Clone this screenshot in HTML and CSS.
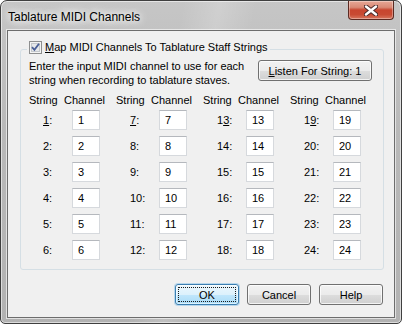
FILE: index.html
```html
<!DOCTYPE html>
<html lang="en">
<head>
    <meta charset="UTF-8">
    <title>Tablature MIDI Channels</title>
    <link rel="stylesheet" href="styles.css">
</head>
<body>
    <div class="window">
        <div class="titlebar">
            <span class="title">Tablature MIDI Channels</span>
            <button class="close-btn" title="Close">
                <svg width="14" height="11" viewBox="0 0 14 11">
                    <path d="M2 1.5 L12 9.5 M12 1.5 L2 9.5" stroke="#4a2a2a" stroke-width="4.4" stroke-linecap="round"/>
                    <path d="M2 1.5 L12 9.5 M12 1.5 L2 9.5" stroke="#fff" stroke-width="2.4" stroke-linecap="round"/>
                </svg>
            </button>
        </div>

        <div class="client">
            <fieldset class="group">
                <legend class="group-title">
                    <span class="check">
                        <svg width="13" height="13" viewBox="0 0 13 13">
                            <rect x="0.5" y="0.5" width="12" height="12" fill="#f4f4f4" stroke="#8e8f8f"/>
                            <rect x="2.5" y="2.5" width="8" height="8" fill="#e6e8ea" stroke="#c4c8cc"/>
                            <path d="M3 6.2 L5.4 8.8 L10 2.8" fill="none" stroke="#4a5f97" stroke-width="1.8"/>
                        </svg>
                    </span>
                    <span><u>M</u>ap MIDI Channels To Tablature Staff Strings</span>
                </legend>

                <div class="intro">
                    <p class="intro-text">Enter the input MIDI channel to use for each<br>string when recording to tablature staves.</p>
                    <button class="btn listen-btn"><u>L</u>isten For String: 1</button>
                </div>

                <div class="channels channels-head">
                    <span>String</span><span>Channel</span>
                    <span>String</span><span>Channel</span>
                    <span>String</span><span>Channel</span>
                    <span>String</span><span>Channel</span>
                </div>

                <div class="channels channels-body">
                    <label class="num"><u>1</u>:</label><div class="cell"><input class="chan" value="1"></div>
                    <label class="num"><u>7</u>:</label><div class="cell"><input class="chan" value="7"></div>
                    <label class="num">1<u>3</u>:</label><div class="cell"><input class="chan" value="13"></div>
                    <label class="num">1<u>9</u>:</label><div class="cell"><input class="chan" value="19"></div>

                    <label class="num">2:</label><div class="cell"><input class="chan" value="2"></div>
                    <label class="num">8:</label><div class="cell"><input class="chan" value="8"></div>
                    <label class="num">14:</label><div class="cell"><input class="chan" value="14"></div>
                    <label class="num">20:</label><div class="cell"><input class="chan" value="20"></div>

                    <label class="num">3:</label><div class="cell"><input class="chan" value="3"></div>
                    <label class="num">9:</label><div class="cell"><input class="chan" value="9"></div>
                    <label class="num">15:</label><div class="cell"><input class="chan" value="15"></div>
                    <label class="num">21:</label><div class="cell"><input class="chan" value="21"></div>

                    <label class="num">4:</label><div class="cell"><input class="chan" value="4"></div>
                    <label class="num">10:</label><div class="cell"><input class="chan" value="10"></div>
                    <label class="num">16:</label><div class="cell"><input class="chan" value="16"></div>
                    <label class="num">22:</label><div class="cell"><input class="chan" value="22"></div>

                    <label class="num">5:</label><div class="cell"><input class="chan" value="5"></div>
                    <label class="num">11:</label><div class="cell"><input class="chan" value="11"></div>
                    <label class="num">17:</label><div class="cell"><input class="chan" value="17"></div>
                    <label class="num">23:</label><div class="cell"><input class="chan" value="23"></div>

                    <label class="num">6:</label><div class="cell"><input class="chan" value="6"></div>
                    <label class="num">12:</label><div class="cell"><input class="chan" value="12"></div>
                    <label class="num">18:</label><div class="cell"><input class="chan" value="18"></div>
                    <label class="num">24:</label><div class="cell"><input class="chan" value="24"></div>
                </div>
            </fieldset>

            <div class="actions">
                <button class="btn btn-default">OK</button>
                <button class="btn">Cancel</button>
                <button class="btn">Help</button>
            </div>
        </div>
    </div>
</body>
</html>
```

FILE: styles.css
```css
* {
    box-sizing: border-box;
}

body {
    margin: 0;
    background: #fff;
    font-family: "Liberation Sans", Arial, sans-serif;
    font-size: 11px;
    color: #000;
}

/* window frame */
.window {
    width: 402px;
    height: 324px;
    padding: 0 6px 5px 6px;
    border: 1px solid #3f3f3f;
    border-radius: 7px 7px 5px 5px;
    background:
        linear-gradient(100deg, rgba(255,255,255,0) 40%, rgba(255,255,255,0.18) 48%, rgba(255,255,255,0) 56%),
        linear-gradient(180deg, #c6c6c6 0%, #b9b9b9 40%, #b2b2b2 100%);
    box-shadow: inset 0 0 0 1px rgba(255,255,255,0.55);
    display: flex;
    flex-direction: column;
}

.titlebar {
    height: 29px;
    display: flex;
    align-items: flex-start;
}

.title {
    padding: 9px 0 0 1px;
    font-size: 12px;
    line-height: 14px;
    color: #000;
    text-shadow: 0 0 6px #fff, 0 0 10px #fff, 0 0 14px #f2f2f2;
}

.close-btn {
    margin-left: auto;
    margin-right: 1px;
    width: 46px;
    height: 19px;
    padding: 0;
    border: 1px solid #5b2a22;
    border-top: none;
    border-radius: 0 0 4px 4px;
    background: linear-gradient(180deg, #e7a796 0%, #d98a76 35%, #c8452f 50%, #c84a33 75%, #d7765e 100%);
    box-shadow: inset 0 0 0 1px rgba(255,255,255,0.35);
    display: flex;
    align-items: center;
    justify-content: center;
}

/* client area */
.client {
    flex: 1;
    background: #f0f0f0;
    border: 1px solid #6d6d6d;
    box-shadow: 0 0 0 1px rgba(255,255,255,0.6);
    display: flex;
    flex-direction: column;
}

.group {
    margin: 9px 10px 0 12px;
    padding: 0 11px 9px 8px;
    border: 1px solid #d5dfe5;
    border-radius: 3px;
    min-width: 0;
}

.group-title {
    margin-left: -2px;
    padding: 0 2px 4px 2px;
    display: flex;
    align-items: center;
    gap: 3px;
    line-height: 15px;
}

.check {
    display: flex;
    width: 13px;
    height: 13px;
}

.intro {
    display: flex;
    justify-content: space-between;
    align-items: flex-start;
}

.intro-text {
    margin: 0;
    line-height: 14px;
    white-space: nowrap;
}

.btn {
    font-family: inherit;
    font-size: 11px;
    color: #000;
    height: 21px;
    padding: 0 4px;
    border: 1px solid #707070;
    border-radius: 3px;
    background: linear-gradient(180deg, #f2f2f2 0%, #ebebeb 50%, #dddddd 51%, #cfcfcf 100%);
    box-shadow: inset 0 0 0 1px rgba(255,255,255,0.75);
    white-space: nowrap;
}

.listen-btn {
    width: 114px;
    margin-top: 1px;
}

.btn-default {
    border-color: #3c7fb1;
    background: linear-gradient(180deg, #ecf7fd 0%, #dcf1fc 50%, #c1e7fc 51%, #a9dbf6 100%);
    box-shadow: inset 0 0 0 1px rgba(255,255,255,0.6), 0 0 0 1px rgba(80,170,230,0.35);
    outline: 1px dotted #1a1a1a;
    outline-offset: -4px;
}

/* channel table */
.channels {
    display: grid;
    grid-template-columns: repeat(4, 35px 52px);
}

.channels-head {
    margin-top: 6px;
    line-height: 15px;
}

.channels-body {
    margin-top: 2px;
    grid-auto-rows: 20px;
    row-gap: 6px;
    align-items: center;
}

.num {
    padding-left: 14px;
    line-height: 14px;
}

.cell {
    display: flex;
    padding-left: 8px;
}

.chan {
    width: 28px;
    height: 20px;
    padding: 0 0 0 5px;
    border: 1px solid #d6d9dd;
    border-top-color: #b5b8bd;
    background: #fff;
    font-family: inherit;
    font-size: 11px;
    color: #000;
}

/* bottom buttons */
.actions {
    margin: 14px 11px 0 0;
    display: flex;
    justify-content: flex-end;
    gap: 8px;
}

.actions .btn {
    width: 64px;
}
```
